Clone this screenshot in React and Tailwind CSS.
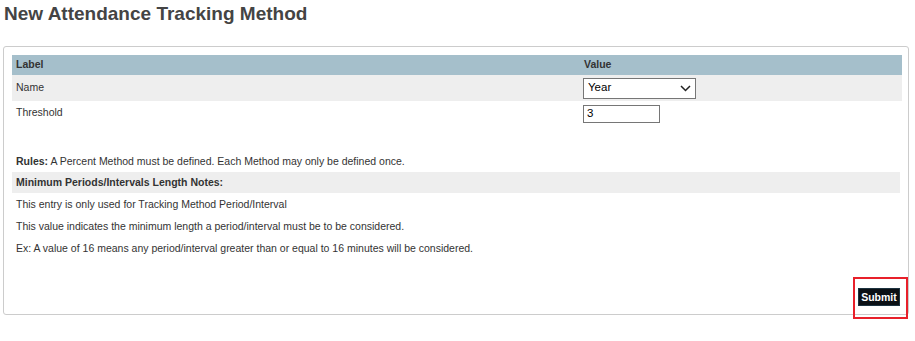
export default function App() {
  return (
    <div className="w-[915px] h-[341px] bg-white relative" style={{ fontFamily: '"Liberation Sans", Arial, sans-serif' }}>
      <h3 className="pt-[4px] pl-[4px] text-[19px] leading-[20px] font-bold text-[#444]">New Attendance Tracking Method</h3>
      <div className="ml-[3px] mt-[22px] w-[906px] h-[269px] border border-[#ccc] rounded-[3px] p-[8px] text-[10.5px] text-[#333] relative">
        <table className="w-[890px] border-collapse">
          <thead>
            <tr className="bg-[#a5bfcb] h-[20px]">
              <th className="text-left font-bold pl-[4px] w-[568px]">Label</th>
              <th className="text-left font-bold pl-[4px]">Value</th>
            </tr>
          </thead>
          <tbody>
            <tr className="bg-[#eee] h-[26px]">
              <td className="pl-[4px] align-top pt-[5px]">Name</td>
              <td className="pl-[3px]">
                <div className="w-[113px] h-[21px] border border-[#767676] bg-white flex items-center justify-between px-[4px] text-[11.5px] text-black">
                  <span>Year</span>
                  <svg width="11" height="7" viewBox="0 0 11 7"><path d="M1 1l4.5 4.5L10 1" fill="none" stroke="#222" strokeWidth="1.5" /></svg>
                </div>
              </td>
            </tr>
            <tr className="h-[22px]">
              <td className="pl-[4px] align-top pt-[4px]">Threshold</td>
              <td className="pl-[3px] pt-[4px] align-top">
                <div className="w-[77px] h-[18px] border border-[#767676] bg-white flex items-center px-[3px] text-[11.5px] text-black">3</div>
              </td>
            </tr>
          </tbody>
        </table>
        <div className="mt-[28px] pl-[4px] h-[21px] leading-[21px]"><span className="font-bold">Rules:</span> A Percent Method must be defined. Each Method may only be defined once.</div>
        <div className="bg-[#eee] pl-[4px] h-[21px] leading-[21px] font-bold">Minimum Periods/Intervals Length Notes:</div>
        <div className="pl-[4px] h-[21px] leading-[21px] mt-[1px]">This entry is only used for Tracking Method Period/Interval</div>
        <div className="pl-[4px] h-[21px] leading-[21px] mt-[1px]">This value indicates the minimum length a period/interval must be to be considered.</div>
        <div className="pl-[4px] h-[21px] leading-[21px] mt-[1px]">Ex: A value of 16 means any period/interval greater than or equal to 16 minutes will be considered.</div>
        <div className="flex justify-end mt-[29px]">
          <button className="bg-[#0b1015] text-white font-bold text-[10.5px] h-[18px] w-[42px] leading-[16px] border border-[#1d3340]">Submit</button>
        </div>
        <div className="absolute left-[849px] top-[230px] w-[55px] h-[42px] border-2 border-[#e8202a] pointer-events-none"></div>
      </div>
    </div>
  );
}
